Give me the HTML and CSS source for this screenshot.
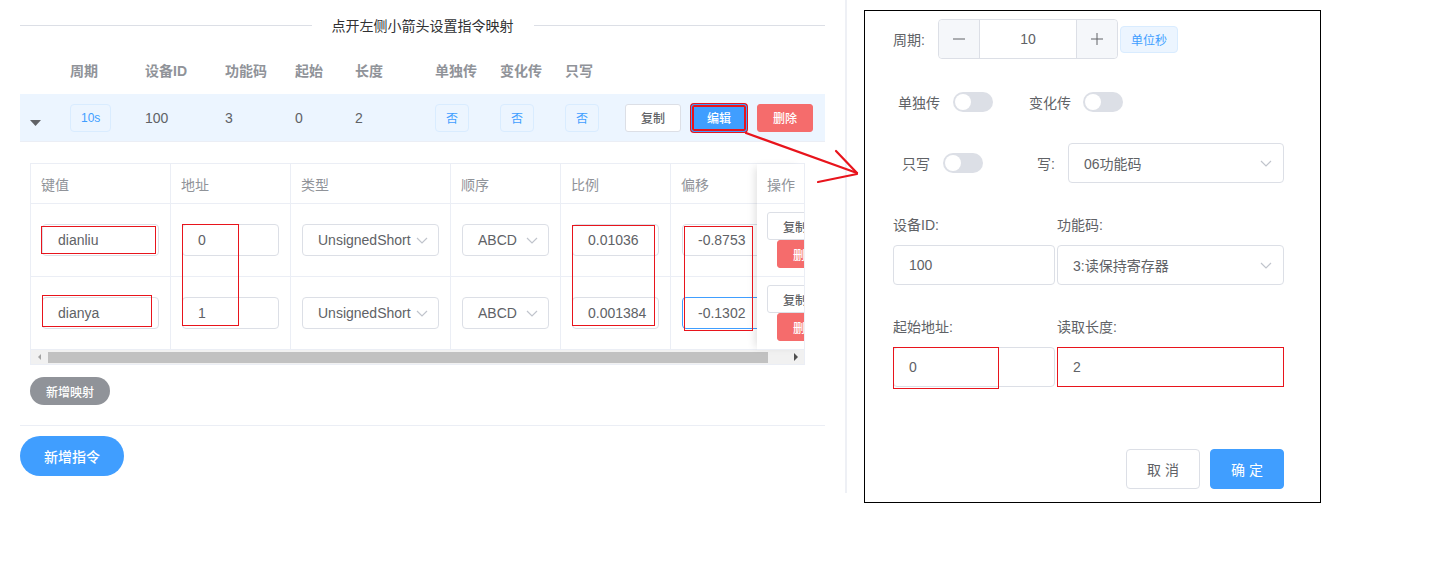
FILE: index.html
```html
<!DOCTYPE html>
<html lang="zh-CN">

<head>
    <meta charset="UTF-8">
    <meta name="viewport" content="width=device-width, initial-scale=1.0">
    <title>指令映射</title>
    <link rel="stylesheet" href="styles.css">
</head>

<body>
    <div class="page">
        <!-- left: command list -->
        <div class="cmd-panel">
            <div class="divider"><span>点开左侧小箭头设置指令映射</span></div>

            <div class="cmd-grid cmd-head">
                <div></div>
                <div class="cell">周期</div>
                <div class="cell">设备ID</div>
                <div class="cell">功能码</div>
                <div class="cell">起始</div>
                <div class="cell">长度</div>
                <div class="cell">单独传</div>
                <div class="cell">变化传</div>
                <div class="cell">只写</div>
                <div></div>
            </div>

            <div class="cmd-grid cmd-row">
                <div class="cell expand">
                    <svg width="11" height="6" viewBox="0 0 11 6"><polygon points="0,0 11,0 5.5,6" fill="#606266" /></svg>
                </div>
                <div class="cell"><span class="tag">10s</span></div>
                <div class="cell">100</div>
                <div class="cell">3</div>
                <div class="cell">0</div>
                <div class="cell">2</div>
                <div class="cell"><span class="tag">否</span></div>
                <div class="cell"><span class="tag">否</span></div>
                <div class="cell"><span class="tag">否</span></div>
                <div class="cell ops">
                    <button class="btn btn-plain">复制</button>
                    <button class="btn btn-primary marked">编辑</button>
                    <button class="btn btn-danger">删除</button>
                </div>
            </div>

            <!-- expanded row: mapping table -->
            <div class="cmd-expand">
                <div class="map-table">
                    <div class="map-view">
                        <div class="map-grid">
                            <div class="th">键值</div>
                            <div class="th">地址</div>
                            <div class="th">类型</div>
                            <div class="th">顺序</div>
                            <div class="th">比例</div>
                            <div class="th">偏移</div>

                            <div class="td"><div class="input">dianliu</div></div>
                            <div class="td"><div class="input">0</div></div>
                            <div class="td"><div class="input select"><span>UnsignedShort</span><svg class="chev" width="12" height="7" viewBox="0 0 12 7"><polyline points="1,1 6,6 11,1" /></svg></div></div>
                            <div class="td"><div class="input select"><span>ABCD</span><svg class="chev" width="12" height="7" viewBox="0 0 12 7"><polyline points="1,1 6,6 11,1" /></svg></div></div>
                            <div class="td"><div class="input">0.01036</div></div>
                            <div class="td"><div class="input">-0.8753</div></div>

                            <div class="td"><div class="input">dianya</div></div>
                            <div class="td"><div class="input">1</div></div>
                            <div class="td"><div class="input select"><span>UnsignedShort</span><svg class="chev" width="12" height="7" viewBox="0 0 12 7"><polyline points="1,1 6,6 11,1" /></svg></div></div>
                            <div class="td"><div class="input select"><span>ABCD</span><svg class="chev" width="12" height="7" viewBox="0 0 12 7"><polyline points="1,1 6,6 11,1" /></svg></div></div>
                            <div class="td"><div class="input">0.001384</div></div>
                            <div class="td"><div class="input focused">-0.1302</div></div>
                        </div>
                    </div>

                    <!-- fixed right column -->
                    <div class="map-fixed">
                        <div class="th">操作</div>
                        <div class="td-ops">
                            <div class="ops-wrap">
                                <button class="btn btn-plain">复制</button>
                                <button class="btn btn-danger">删除</button>
                            </div>
                        </div>
                        <div class="td-ops">
                            <div class="ops-wrap">
                                <button class="btn btn-plain">复制</button>
                                <button class="btn btn-danger">删除</button>
                            </div>
                        </div>
                    </div>

                    <div class="hscroll">
                        <span class="sb-arrow left"></span>
                        <span class="sb-thumb"></span>
                        <span class="sb-arrow right"></span>
                    </div>

                    <!-- red marks -->
                    <div class="mark m-key1"></div>
                    <div class="mark m-addr"></div>
                    <div class="mark m-key2"></div>
                    <div class="mark m-ratio"></div>
                    <div class="mark m-offset"></div>
                </div>
                <button class="btn-round btn-gray">新增映射</button>
            </div>

            <button class="btn-round btn-blue">新增指令</button>
        </div>

        <div class="vline"></div>

        <!-- right: edit dialog -->
        <div class="dialog">
            <div class="f-row">
                <label class="lbl-period">周期:</label>
                <div class="num-input">
                    <span class="num-btn minus"><svg width="12" height="12" viewBox="0 0 12 12"><line x1="0" y1="6" x2="12" y2="6" /></svg></span>
                    <span class="num-value">10</span>
                    <span class="num-btn plus"><svg width="12" height="12" viewBox="0 0 12 12"><line x1="0" y1="6" x2="12" y2="6" /><line x1="6" y1="0" x2="6" y2="12" /></svg></span>
                </div>
                <span class="tag tag-unit">单位秒</span>
            </div>

            <div class="f-row row-switch">
                <label class="lbl lbl-single">单独传</label>
                <span class="switch"></span>
                <label class="lbl lbl-change">变化传</label>
                <span class="switch"></span>
            </div>

            <div class="f-row row-write">
                <label class="lbl lbl-only">只写</label>
                <span class="switch"></span>
                <label class="lbl lbl-write">写:</label>
                <div class="d-input select grow"><span>06功能码</span><svg class="chev" width="12" height="7" viewBox="0 0 12 7"><polyline points="1,1 6,6 11,1" /></svg></div>
            </div>

            <div class="f-grid">
                <div class="f-col">
                    <label class="lbl-top">设备ID:</label>
                    <div class="d-input">100</div>
                </div>
                <div class="f-col">
                    <label class="lbl-top">功能码:</label>
                    <div class="d-input select"><span>3:读保持寄存器</span><svg class="chev" width="12" height="7" viewBox="0 0 12 7"><polyline points="1,1 6,6 11,1" /></svg></div>
                </div>
            </div>

            <div class="f-grid">
                <div class="f-col">
                    <label class="lbl-top">起始地址:</label>
                    <div class="d-input has-mark">0<span class="mark m-start"></span></div>
                </div>
                <div class="f-col">
                    <label class="lbl-top">读取长度:</label>
                    <div class="d-input red">2</div>
                </div>
            </div>

            <div class="d-footer">
                <button class="d-btn d-cancel">取 消</button>
                <button class="d-btn d-ok">确 定</button>
            </div>
        </div>
    </div>

    <!-- annotation arrow -->
    <svg class="arrow-mark" width="1439" height="571" viewBox="0 0 1439 571">
        <g stroke="#e8141c" stroke-width="2.2" stroke-linecap="round" fill="none">
            <line x1="746" y1="133" x2="857" y2="173" />
            <line x1="836" y1="151" x2="857" y2="173" />
            <line x1="818" y1="182" x2="857" y2="174" />
        </g>
    </svg>
</body>

</html>
```

FILE: styles.css
```css
body {
    margin: 0;
    font-family: "Liberation Sans", "Noto Sans CJK SC", sans-serif;
    font-size: 14px;
    color: #606266;
    background-color: #fff;
}

button {
    font-family: inherit;
    cursor: pointer;
}

.page {
    display: flex;
    align-items: flex-start;
}

/* left panel */
.cmd-panel {
    width: 805px;
    margin-left: 20px;
}

.divider {
    display: flex;
    align-items: center;
    height: 20px;
    margin-top: 15px;
    color: #303133;
}

.divider::before,
.divider::after {
    content: "";
    flex: 1;
    height: 1px;
    background-color: #dcdfe6;
}

.divider span {
    padding: 0 20px;
}

.cmd-grid {
    display: grid;
    grid-template-columns: 40px 75px 80px 70px 60px 80px 65px 65px 60px 1fr;
}

.cmd-grid .cell {
    display: flex;
    align-items: center;
    padding-left: 10px;
}

.cmd-head {
    height: 47px;
    margin-top: 11px;
    color: #909399;
    font-weight: bold;
}

.cmd-row {
    height: 48px;
    box-sizing: border-box;
    margin-top: 1px;
    background-color: #ecf5ff;
    border-bottom: 1px solid #ebeef5;
}

.cmd-row .expand svg {
    margin-top: 10px;
}

.tag {
    display: inline-flex;
    align-items: center;
    box-sizing: border-box;
    height: 28px;
    padding: 0 10px;
    border: 1px solid #d9ecff;
    border-radius: 4px;
    background-color: #ecf5ff;
    color: #409eff;
    font-size: 12px;
}

.btn {
    width: 56px;
    height: 28px;
    padding: 0;
    border: 1px solid #dcdfe6;
    border-radius: 3px;
    font-size: 12px;
    font-weight: 500;
}

.ops .btn + .btn {
    margin-left: 10px;
}

.btn-plain {
    background-color: #fff;
    color: #606266;
}

.btn-primary {
    background-color: #409eff;
    border-color: #409eff;
    color: #fff;
}

.btn-danger {
    background-color: #f56c6c;
    border-color: #f56c6c;
    color: #fff;
}

.btn.marked {
    box-shadow: 0 0 0 1px #e8141c, inset 0 0 0 2px #e8141c;
}

/* expanded area */
.cmd-expand {
    padding: 21px 20px 20px 10px;
    border-bottom: 1px solid #ebeef5;
}

.map-table {
    position: relative;
    width: 775px;
    box-sizing: border-box;
    border: 1px solid #ebeef5;
}

.map-view {
    overflow: hidden;
}

.map-grid {
    display: grid;
    grid-template-columns: 140px 120px 160px 110px 110px 110px;
    grid-template-rows: 40px 73px 73px;
    width: 750px;
}

.th {
    display: flex;
    align-items: center;
    box-sizing: border-box;
    height: 40px;
    padding-left: 10px;
    border-bottom: 1px solid #ebeef5;
    color: #909399;
}

.map-grid .th,
.td {
    border-right: 1px solid #ebeef5;
}

.td {
    display: flex;
    align-items: center;
    box-sizing: border-box;
    padding: 0 11px;
    border-bottom: 1px solid #ebeef5;
}

.input {
    display: flex;
    align-items: center;
    box-sizing: border-box;
    width: 100%;
    height: 32px;
    padding: 0 15px;
    border: 1px solid #dcdfe6;
    border-radius: 4px;
    background-color: #fff;
    color: #606266;
    white-space: nowrap;
}

.input.focused {
    border-color: #409eff;
}

.select {
    justify-content: space-between;
    padding-right: 10px;
}

.chev {
    flex: none;
}

.chev polyline {
    fill: none;
    stroke: #c0c4cc;
    stroke-width: 1.2;
}

.map-fixed {
    position: absolute;
    top: 0;
    right: 0;
    bottom: 14px;
    width: 47px;
    overflow: hidden;
    background-color: #fff;
    box-shadow: -5px 0 8px -3px rgba(0, 0, 0, 0.12);
}

.td-ops {
    box-sizing: border-box;
    height: 73px;
    padding: 8px 0 0 10px;
    border-bottom: 1px solid #ebeef5;
}

.ops-wrap {
    display: flex;
    flex-wrap: wrap;
    width: 100px;
}

.ops-wrap .btn-danger {
    margin-left: 10px;
}

.hscroll {
    display: flex;
    align-items: center;
    height: 14px;
    background-color: #f1f1f1;
}

.sb-arrow {
    width: 16px;
    display: flex;
    justify-content: center;
}

.sb-arrow.left::before {
    content: "";
    border-top: 3px solid transparent;
    border-bottom: 3px solid transparent;
    border-right: 3px solid #a3a3a3;
}

.sb-arrow.right::before {
    content: "";
    border-top: 4px solid transparent;
    border-bottom: 4px solid transparent;
    border-left: 4px solid #505050;
}

.sb-thumb {
    width: 720px;
    height: 11px;
    margin-left: 1px;
    margin-right: 20px;
    background-color: #c1c1c1;
}

.mark {
    position: absolute;
    box-sizing: border-box;
    border: 1px solid #e8141c;
}

.m-key1 { left: 10px; top: 62px; width: 115px; height: 28px; }
.m-addr { left: 151px; top: 60px; width: 57px; height: 102px; }
.m-key2 { left: 11px; top: 131px; width: 110px; height: 32px; }
.m-ratio { left: 541px; top: 61px; width: 83px; height: 101px; }
.m-offset { left: 653px; top: 62px; width: 69px; height: 105px; }

.btn-round {
    border: none;
    color: #fff;
    font-weight: 500;
}

.btn-gray {
    display: block;
    width: 80px;
    height: 28px;
    margin-top: 12px;
    border-radius: 14px;
    background-color: #909399;
    font-size: 12px;
}

.btn-blue {
    display: block;
    width: 104px;
    height: 40px;
    margin-top: 10px;
    border-radius: 20px;
    background-color: #409eff;
    font-size: 14px;
}

.vline {
    width: 2px;
    height: 493px;
    margin-left: 20px;
    background-color: #eef0f5;
}

/* right dialog */
.dialog {
    box-sizing: border-box;
    width: 457px;
    height: 493px;
    margin-top: 10px;
    margin-left: 17px;
    padding: 8px 36px 0 28px;
    border: 1px solid #000;
}

.f-row {
    display: flex;
    align-items: center;
    height: 40px;
}

.lbl-period {
    width: 45px;
}

.num-input {
    display: flex;
    box-sizing: border-box;
    width: 180px;
    height: 40px;
    border: 1px solid #dcdfe6;
    border-radius: 4px;
}

.num-btn {
    display: flex;
    align-items: center;
    justify-content: center;
    width: 40px;
    background-color: #f5f7fa;
}

.num-btn line {
    stroke: #606266;
    stroke-width: 1;
}

.num-btn.minus {
    border-right: 1px solid #dcdfe6;
    border-radius: 4px 0 0 4px;
}

.num-btn.plus {
    border-left: 1px solid #dcdfe6;
    border-radius: 0 4px 4px 0;
}

.num-value {
    flex: 1;
    text-align: center;
    line-height: 38px;
}

.tag-unit {
    height: 27px;
    margin-left: 2px;
}

.row-switch {
    margin-top: 23px;
}

.row-write {
    margin-top: 21px;
}

.lbl {
    text-align: right;
}

.lbl-single { width: 47px; }
.lbl-change { width: 78px; }
.lbl-only { width: 37px; }
.lbl-write { width: 72px; }

.switch {
    position: relative;
    width: 40px;
    height: 20px;
    margin-left: 13px;
    border-radius: 10px;
    background-color: #dcdfe6;
}

.lbl-change + .switch {
    margin-left: 12px;
}

.switch::after {
    content: "";
    position: absolute;
    top: 2px;
    left: 2px;
    width: 16px;
    height: 16px;
    border-radius: 50%;
    background-color: #fff;
}

.d-input {
    display: flex;
    align-items: center;
    box-sizing: border-box;
    height: 40px;
    padding: 0 15px;
    border: 1px solid #dcdfe6;
    border-radius: 4px;
    color: #606266;
}

.d-input.select {
    padding-right: 11px;
}

.d-input.grow {
    flex: 1;
    margin-left: 13px;
}

.d-input.red {
    border-color: #e8141c;
    border-radius: 0;
}

.has-mark {
    position: relative;
}

.m-start {
    left: -1px;
    top: -1px;
    width: 106px;
    height: 42px;
}

.f-grid {
    display: grid;
    grid-template-columns: 162px 227px;
    column-gap: 2px;
    margin-top: 32px;
}

.lbl-top {
    display: block;
    line-height: 20px;
    margin-bottom: 10px;
}

.d-footer {
    display: flex;
    justify-content: flex-end;
    margin-top: 62px;
}

.d-btn {
    width: 74px;
    height: 40px;
    padding: 0;
    border: 1px solid #dcdfe6;
    border-radius: 4px;
    font-size: 14px;
}

.d-btn + .d-btn {
    margin-left: 10px;
}

.d-cancel {
    background-color: #fff;
    color: #606266;
}

.d-ok {
    background-color: #409eff;
    border-color: #409eff;
    color: #fff;
}

.arrow-mark {
    position: absolute;
    top: 0;
    left: 0;
    pointer-events: none;
}
```
